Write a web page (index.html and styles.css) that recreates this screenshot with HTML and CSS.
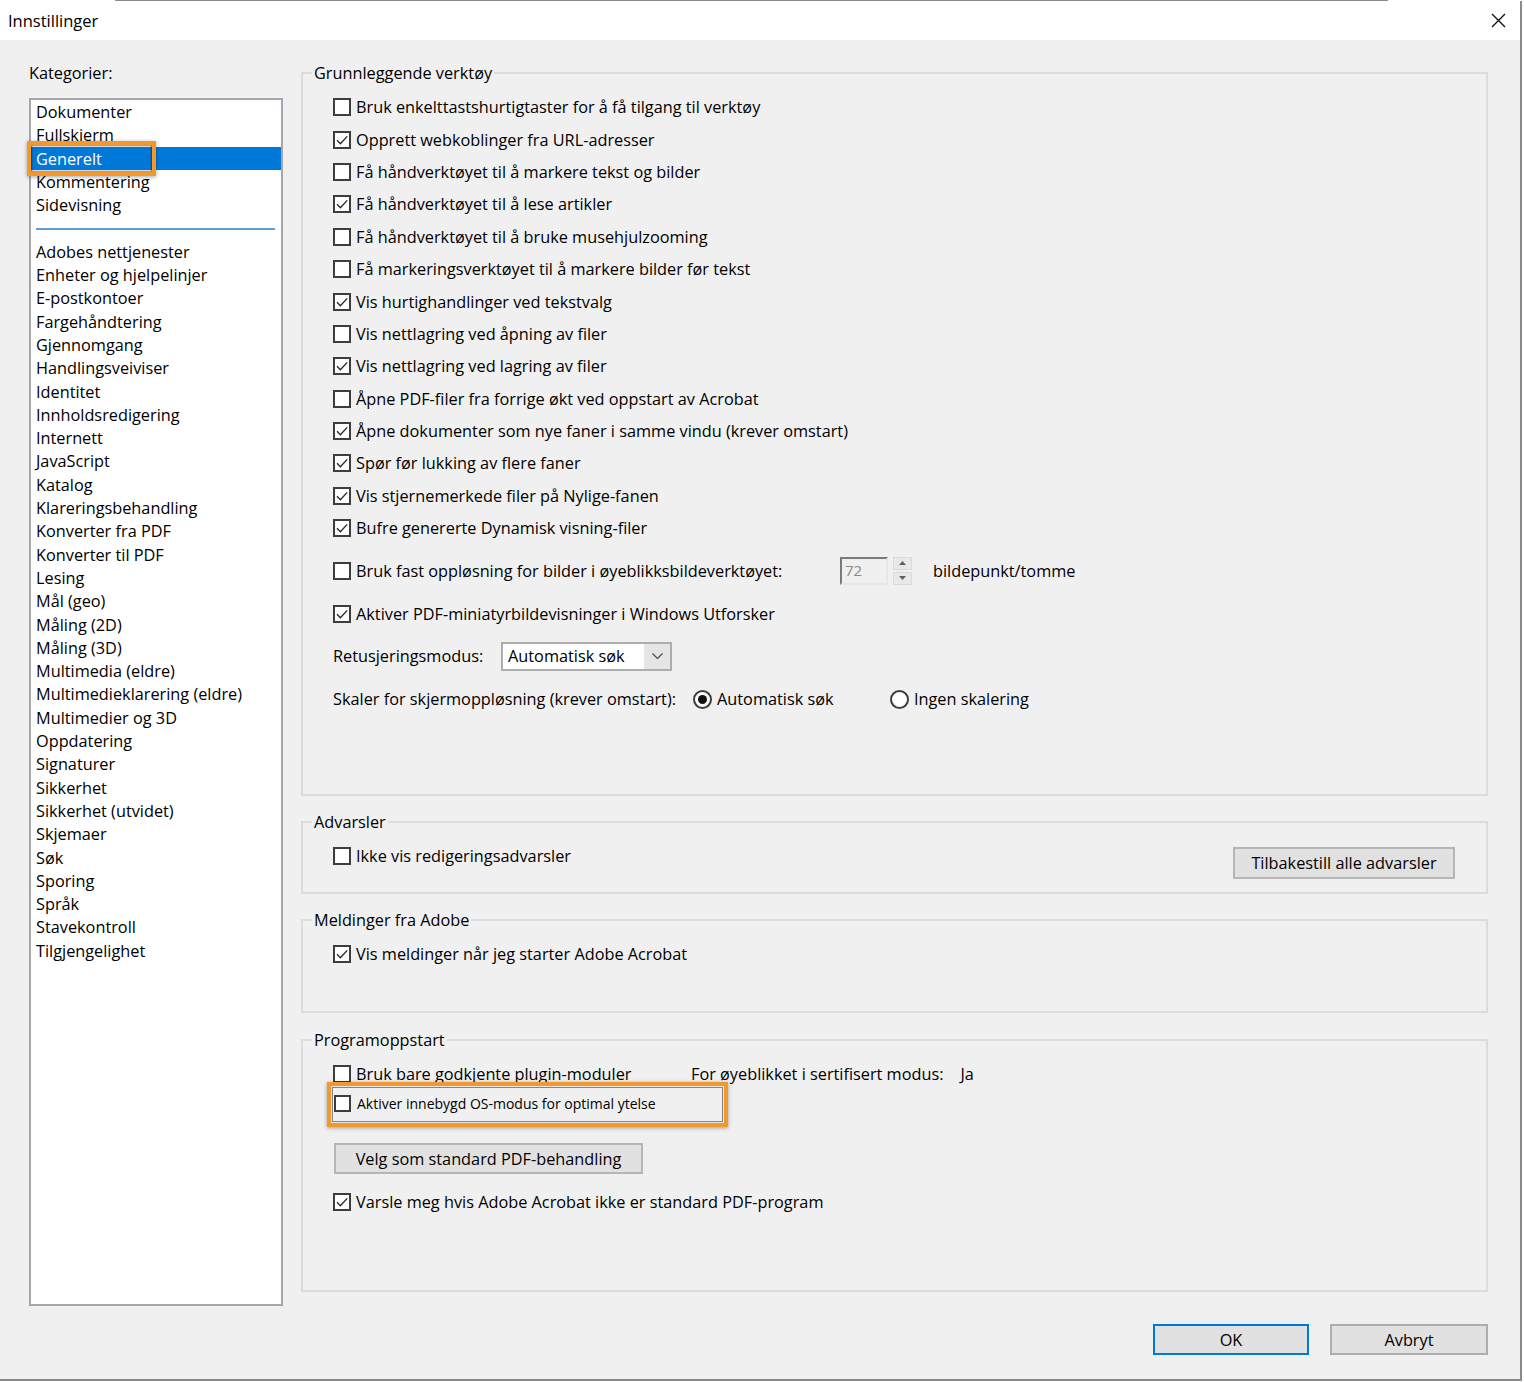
FILE: index.html
```html
<!DOCTYPE html>
<html lang="no">
<head>
<meta charset="utf-8">
<title>Innstillinger</title>
<link rel="stylesheet" href="styles.css">
</head>
<body>
<div class="topline"></div>
<div class="window">
  <div class="titlebar">
    <span class="title">Innstillinger</span>
    <svg class="close" width="15" height="15" viewBox="0 0 15 15"><path d="M1 1L14 14M14 1L1 14" stroke="#111" stroke-width="1.4" fill="none"/></svg>
  </div>
  <div class="main">
    <div class="left">
      <div class="cat-label">Kategorier:</div>
      <div class="listbox">
        <ul class="items">
          <li>Dokumenter</li>
          <li>Fullskierm</li>
          <li class="sel">Generelt</li>
          <li>Kommentering</li>
          <li>Sidevisning</li>
          <li class="sep"><span></span></li>
          <li>Adobes nettjenester</li>
          <li>Enheter og hjelpelinjer</li>
          <li>E-postkontoer</li>
          <li>Fargehåndtering</li>
          <li>Gjennomgang</li>
          <li>Handlingsveiviser</li>
          <li>Identitet</li>
          <li>Innholdsredigering</li>
          <li>Internett</li>
          <li>JavaScript</li>
          <li>Katalog</li>
          <li>Klareringsbehandling</li>
          <li>Konverter fra PDF</li>
          <li>Konverter til PDF</li>
          <li>Lesing</li>
          <li>Mål (geo)</li>
          <li>Måling (2D)</li>
          <li>Måling (3D)</li>
          <li>Multimedia (eldre)</li>
          <li>Multimedieklarering (eldre)</li>
          <li>Multimedier og 3D</li>
          <li>Oppdatering</li>
          <li>Signaturer</li>
          <li>Sikkerhet</li>
          <li>Sikkerhet (utvidet)</li>
          <li>Skjemaer</li>
          <li>Søk</li>
          <li>Sporing</li>
          <li>Språk</li>
          <li>Stavekontroll</li>
          <li>Tilgjengelighet</li>
        </ul>
        <div class="hl hl-cat"></div>
      </div>
    </div>

    <div class="right">
      <fieldset class="group g1">
        <legend>Grunnleggende verktøy</legend>
        <div class="content">
          <div class="row"><span class="cb"></span><span>Bruk enkelttastshurtigtaster for å få tilgang til verktøy</span></div>
          <div class="row"><span class="cb"><svg viewBox="0 0 14 14"><path d="M2 7.3L5.4 10.8L12.2 3.4"/></svg></span><span>Opprett webkoblinger fra URL-adresser</span></div>
          <div class="row"><span class="cb"></span><span>Få håndverktøyet til å markere tekst og bilder</span></div>
          <div class="row"><span class="cb"><svg viewBox="0 0 14 14"><path d="M2 7.3L5.4 10.8L12.2 3.4"/></svg></span><span>Få håndverktøyet til å lese artikler</span></div>
          <div class="row"><span class="cb"></span><span>Få håndverktøyet til å bruke musehjulzooming</span></div>
          <div class="row"><span class="cb"></span><span>Få markeringsverktøyet til å markere bilder før tekst</span></div>
          <div class="row"><span class="cb"><svg viewBox="0 0 14 14"><path d="M2 7.3L5.4 10.8L12.2 3.4"/></svg></span><span>Vis hurtighandlinger ved tekstvalg</span></div>
          <div class="row"><span class="cb"></span><span>Vis nettlagring ved åpning av filer</span></div>
          <div class="row"><span class="cb"><svg viewBox="0 0 14 14"><path d="M2 7.3L5.4 10.8L12.2 3.4"/></svg></span><span>Vis nettlagring ved lagring av filer</span></div>
          <div class="row"><span class="cb"></span><span>Åpne PDF-filer fra forrige økt ved oppstart av Acrobat</span></div>
          <div class="row"><span class="cb"><svg viewBox="0 0 14 14"><path d="M2 7.3L5.4 10.8L12.2 3.4"/></svg></span><span>Åpne dokumenter som nye faner i samme vindu (krever omstart)</span></div>
          <div class="row"><span class="cb"><svg viewBox="0 0 14 14"><path d="M2 7.3L5.4 10.8L12.2 3.4"/></svg></span><span>Spør før lukking av flere faner</span></div>
          <div class="row"><span class="cb"><svg viewBox="0 0 14 14"><path d="M2 7.3L5.4 10.8L12.2 3.4"/></svg></span><span>Vis stjernemerkede filer på Nylige-fanen</span></div>
          <div class="row"><span class="cb"><svg viewBox="0 0 14 14"><path d="M2 7.3L5.4 10.8L12.2 3.4"/></svg></span><span>Bufre genererte Dynamisk visning-filer</span></div>

          <div class="extra">
            <div class="row">
              <div class="spin-label"><span class="cb"></span><span>Bruk fast oppløsning for bilder i øyeblikksbildeverktøyet:</span></div>
              <div class="num">72</div>
              <div class="spin">
                <span class="sbtn"><svg width="7" height="4" viewBox="0 0 7 4"><path d="M0 4L3.5 0L7 4Z" fill="#606060"/></svg></span>
                <span class="sbtn"><svg width="7" height="4" viewBox="0 0 7 4"><path d="M0 0L3.5 4L7 0Z" fill="#606060"/></svg></span>
              </div>
              <span class="unit">bildepunkt/tomme</span>
            </div>
            <div class="row"><span class="cb"><svg viewBox="0 0 14 14"><path d="M2 7.3L5.4 10.8L12.2 3.4"/></svg></span><span>Aktiver PDF-miniatyrbildevisninger i Windows Utforsker</span></div>
            <div class="row">
              <span class="sel-label">Retusjeringsmodus:</span>
              <div class="select">
                <span class="val">Automatisk søk</span>
                <span class="arrow"><svg width="11" height="6" viewBox="0 0 11 6"><path d="M0.5 0.5L5.5 5.5L10.5 0.5" stroke="#444" stroke-width="1.1" fill="none"/></svg></span>
              </div>
            </div>
            <div class="row">
              <span class="radio-label">Skaler for skjermoppløsning (krever omstart):</span>
              <span class="radio-opt"><span class="radio on"><span class="dot"></span></span><span>Automatisk søk</span></span>
              <span class="radio-opt"><span class="radio"></span><span>Ingen skalering</span></span>
            </div>
          </div>
        </div>
      </fieldset>

      <fieldset class="group g2">
        <legend>Advarsler</legend>
        <div class="content warn">
          <div class="row"><span class="cb"></span><span>Ikke vis redigeringsadvarsler</span></div>
          <button class="btn reset" type="button">Tilbakestill alle advarsler</button>
        </div>
      </fieldset>

      <fieldset class="group g3">
        <legend>Meldinger fra Adobe</legend>
        <div class="content">
          <div class="row"><span class="cb"><svg viewBox="0 0 14 14"><path d="M2 7.3L5.4 10.8L12.2 3.4"/></svg></span><span>Vis meldinger når jeg starter Adobe Acrobat</span></div>
        </div>
      </fieldset>

      <fieldset class="group g4">
        <legend>Programoppstart</legend>
        <div class="content">
          <div class="row r-plugin">
            <div class="plugin-label"><span class="cb"></span><span>Bruk bare godkjente plugin-moduler</span></div>
            <span>For øyeblikket i sertifisert modus:</span>
            <span class="ja">Ja</span>
          </div>
          <div class="row r-os">
            <span class="cb small"></span><span>Aktiver innebygd OS-modus for optimal ytelse</span>
            <div class="hl hl-os"></div>
          </div>
          <button class="btn default" type="button">Velg som standard PDF-behandling</button>
          <div class="row r-varsle"><span class="cb"><svg viewBox="0 0 14 14"><path d="M2 7.3L5.4 10.8L12.2 3.4"/></svg></span><span>Varsle meg hvis Adobe Acrobat ikke er standard PDF-program</span></div>
        </div>
      </fieldset>
    </div>
  </div>

  <div class="footer">
    <button class="btn ok" type="button">OK</button>
    <button class="btn cancel" type="button">Avbryt</button>
  </div>
</div>
</body>
</html>
```

FILE: styles.css
```css
* { box-sizing: border-box; }

html, body {
  margin: 0;
  padding: 0;
  background: #ffffff;
}

body {
  font-family: "Open Sans", "Noto Sans", sans-serif;
  font-size: 16.3px;
  color: #000000;
  width: 1524px;
  height: 1382px;
  overflow: hidden;
}

.topline {
  height: 1px;
  width: 1273px;
  margin-left: 115px;
  background: #8c8c8c;
}

.window {
  width: 1522px;
  height: 1380px;
  background: #f0f0f0;
  border-right: 2px solid #8a8a8a;
  border-bottom: 2px solid #8a8a8a;
  display: flex;
  flex-direction: column;
}

.titlebar {
  height: 39px;
  background: #ffffff;
  display: flex;
  align-items: center;
  justify-content: space-between;
  padding: 0 14px 0 8px;
  flex: none;
}

.title {
  font-size: 16.5px;
}

.close { display: block; }

.main {
  display: flex;
  padding: 23px 0 0 29px;
  flex: none;
}

.left {
  width: 254px;
  margin-right: 18px;
  display: flex;
  flex-direction: column;
}

.cat-label {
  height: 20px;
  line-height: 21px;
  margin-bottom: 15px;
}

.listbox {
  position: relative;
  height: 1208px;
  background: #ffffff;
  border: 2px solid #a4a8ae;
}

.items {
  list-style: none;
  margin: 0;
  padding: 0;
}

.items li {
  height: 23.3px;
  line-height: 24.5px;
  padding-left: 5px;
  white-space: nowrap;
}

.items li.sel {
  background: #0078d7;
  color: #ffffff;
}

.items li.sep {
  display: flex;
  align-items: center;
  padding: 0 6px 0 5px;
}

.items li.sep span {
  display: block;
  width: 100%;
  height: 2px;
  margin-top: 2px;
  background: #5e9ed8;
}

.hl {
  position: absolute;
  border: 4px solid #f2982c;
  box-shadow: 0 1px 4px rgba(0, 0, 0, 0.35), inset 0 0 2px 1px rgba(0, 20, 70, 0.55);
  pointer-events: none;
}

.hl-cat {
  left: -4px;
  top: 41px;
  width: 129px;
  height: 35px;
}

.right {
  width: 1187px;
  display: flex;
  flex-direction: column;
}

.group {
  margin: 0;
  border: 2px solid #dcdcdc;
  padding: 0 31px 0 9px;
  min-width: 0;
}

.group legend {
  padding: 0 2px;
  line-height: 21px;
  height: 20px;
}

.g1 { height: 733px; margin-bottom: 16px; }
.g2 { height: 82px; margin-bottom: 16px; }
.g3 { height: 103px; margin-bottom: 17px; }
.g4 { height: 262px; }

.content {
  padding: 8px 0 0 21px;
  display: flex;
  flex-direction: column;
  align-items: flex-start;
}

.row {
  display: flex;
  align-items: center;
  height: 32.4px;
  white-space: nowrap;
}

.cb {
  width: 18px;
  height: 18px;
  border: 2px solid #3d3d3d;
  background: #ffffff;
  margin-right: 5px;
  flex: none;
  display: flex;
  align-items: center;
  justify-content: center;
}

.cb svg {
  width: 14px;
  height: 14px;
  display: block;
}

.cb svg path {
  fill: none;
  stroke: #262626;
  stroke-width: 1.3;
}

.extra {
  display: flex;
  flex-direction: column;
  gap: 10.5px;
  margin-top: 10px;
}

.spin-label {
  width: 507px;
  display: flex;
  align-items: center;
}

.num {
  width: 48px;
  height: 28px;
  border-top: 2px solid #7b7b7b;
  border-left: 2px solid #7b7b7b;
  border-right: 2px solid #e6e6e6;
  border-bottom: 2px solid #e6e6e6;
  background: #f0f0f0;
  color: #8a8a8a;
  padding-left: 3px;
  line-height: 22px;
  font-size: 15px;
}

.spin {
  margin-left: 5px;
  display: flex;
  flex-direction: column;
  gap: 2px;
}

.sbtn {
  width: 19px;
  height: 13px;
  background: #e8e8e8;
  border: 1px solid #dadada;
  display: flex;
  align-items: center;
  justify-content: center;
}

.sbtn svg { display: block; }

.unit {
  margin-left: 21px;
}

.sel-label {
  width: 168px;
}

.select {
  width: 171px;
  height: 29px;
  border: 2px solid #adadad;
  display: flex;
  background: #e5e5e5;
}

.select .val {
  flex: 1;
  background: #ffffff;
  padding-left: 5px;
  line-height: 25px;
}

.select .arrow {
  width: 26px;
  display: flex;
  align-items: center;
  justify-content: center;
}

.radio-label {
  width: 360px;
}

.radio-opt {
  display: flex;
  align-items: center;
  width: 197px;
}

.radio {
  width: 19px;
  height: 19px;
  border: 2px solid #3d3d3d;
  border-radius: 50%;
  background: #ffffff;
  margin-right: 5px;
  display: flex;
  align-items: center;
  justify-content: center;
  flex: none;
}

.radio .dot {
  width: 9px;
  height: 9px;
  border-radius: 50%;
  background: #111111;
}

.content.warn {
  flex-direction: row;
  align-items: flex-start;
  justify-content: space-between;
}

.btn {
  font-family: "Open Sans", "Noto Sans", sans-serif;
  font-size: 16.3px;
  color: #000000;
  background: #e1e1e1;
  border: 2px solid #b6b6b6;
  padding: 0;
  margin: 0;
}

.reset {
  width: 222px;
  height: 32px;
  margin-top: 7px;
}

.r-plugin { height: 32px; }

.plugin-label {
  width: 358px;
  display: flex;
  align-items: center;
}

.ja { margin-left: 17px; }

.r-os {
  position: relative;
  height: 26px;
  padding-left: 1px;
  font-size: 14px;
}

.cb.small {
  width: 17px;
  height: 17px;
  margin-right: 6px;
}

.hl-os {
  left: -6px;
  top: -8px;
  width: 401px;
  height: 45px;
  box-shadow: 0 1px 4px rgba(0, 0, 0, 0.35), inset 0 0 0 1px #e6e6e6, inset 0 0 0 2px #858585;
}

.default {
  width: 309px;
  height: 31px;
  margin-top: 27px;
  margin-left: 1px;
}

.r-varsle { margin-top: 12px; }

.footer {
  display: flex;
  justify-content: flex-end;
  gap: 21px;
  padding-right: 32px;
  margin-top: 18px;
}

.ok {
  width: 156px;
  height: 31px;
  border-color: #0078d7;
}

.cancel {
  width: 158px;
  height: 31px;
  border-color: #adadad;
}
```
